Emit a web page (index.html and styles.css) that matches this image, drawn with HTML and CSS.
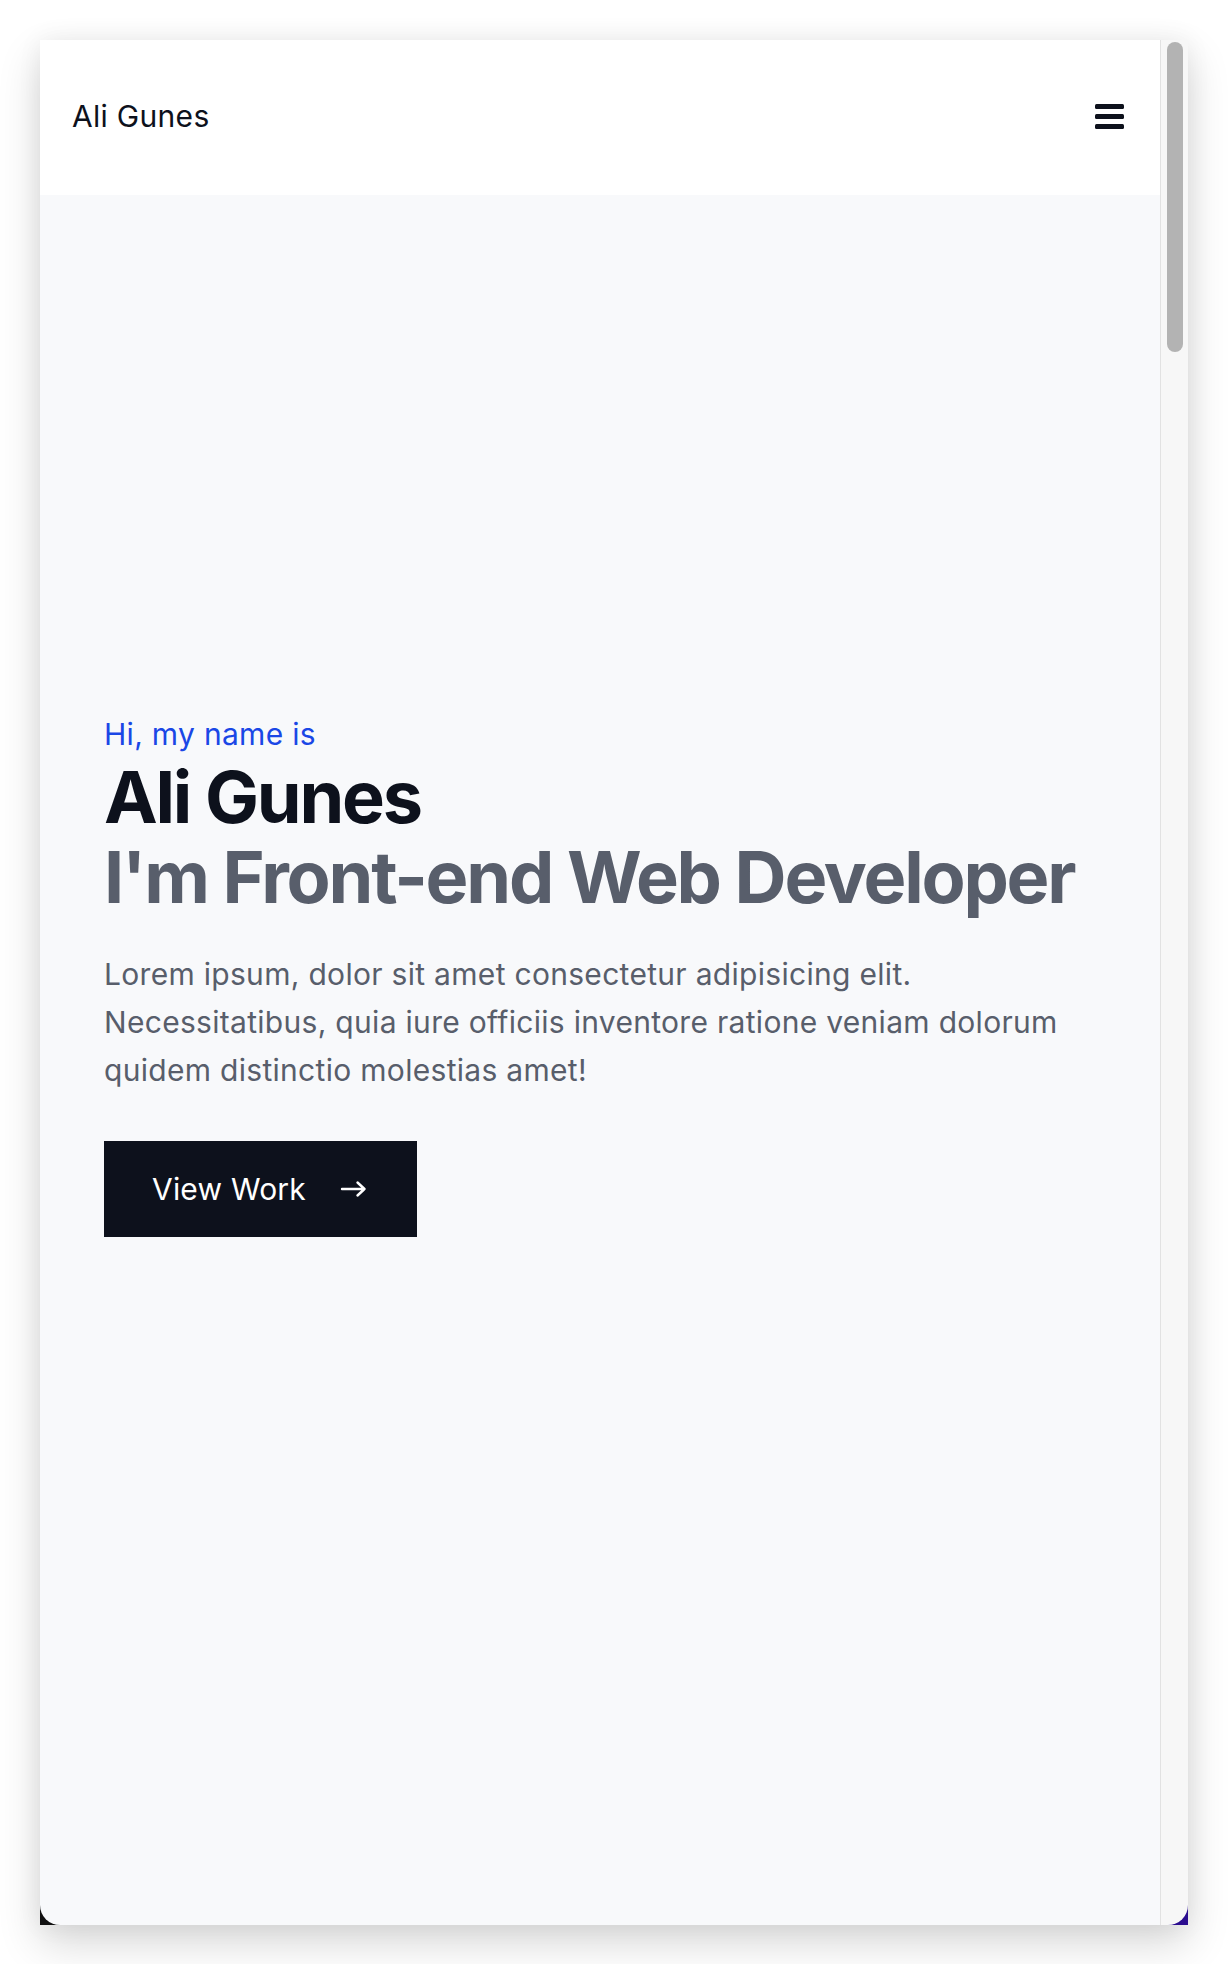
FILE: index.html
```html
<!DOCTYPE html>
<html lang="en">
<head>
    <meta charset="UTF-8">
    <meta name="viewport" content="width=device-width, initial-scale=1.0">
    <title>Ali Gunes</title>
    <link rel="stylesheet" href="styles.css">
</head>
<body>
    <div class="screen">
        <div class="window">
            <div class="page">
                <!-- Navbar -->
                <header class="navbar">
                    <a href="#" class="brand">Ali Gunes</a>
                    <button class="menu-btn" aria-label="Menu">
                        <svg width="29" height="25" viewBox="0 0 29 25">
                            <rect x="0" y="0" width="29" height="5" rx="1.5"/>
                            <rect x="0" y="10" width="29" height="5" rx="1.5"/>
                            <rect x="0" y="20" width="29" height="5" rx="1.5"/>
                        </svg>
                    </button>
                </header>

                <!-- Hero -->
                <section class="hero">
                    <p class="intro">Hi, my name is</p>
                    <h1 class="title">
                        <span class="name">Ali Gunes</span>
                        <span class="role">I'm Front-end Web Developer</span>
                    </h1>
                    <p class="lead">Lorem ipsum, dolor sit amet consectetur adipisicing elit. Necessitatibus, quia iure officiis inventore ratione veniam dolorum quidem distinctio molestias amet!</p>
                    <a href="#work" class="btn">
                        View Work
                        <svg width="27" height="18" viewBox="0 0 27 18">
                            <path d="M2 9 H24.5 M17.5 2.5 L24.5 9 L17.5 15.5" fill="none" stroke="currentColor" stroke-width="2.4" stroke-linecap="round" stroke-linejoin="round"/>
                        </svg>
                    </a>
                </section>
            </div>
            <div class="scrollbar">
                <div class="thumb"></div>
            </div>
        </div>
    </div>
</body>
</html>
```
FILE: styles.css
```css
body {
    margin: 0;
    background-color: #ffffff;
    font-family: Inter, "Noto Sans", Arial, sans-serif;
}

.screen {
    padding: 40px 40px 39px;
}

.window {
    display: flex;
    height: 1885px;
    /* les coins sombres derrière le bas de la fenêtre */
    background: linear-gradient(to right, #111 0%, #111 50%, #2b0d8f 50%, #2b0d8f 100%);
    box-shadow: 0 18px 40px rgba(0, 0, 0, 0.16), 0 0 24px rgba(0, 0, 0, 0.06);
}

.page {
    flex: 1;
    display: flex;
    flex-direction: column;
    background-color: #f8f9fb;
    border-bottom-left-radius: 20px;
    overflow: hidden;
}

.navbar {
    height: 155px;
    flex-shrink: 0;
    box-sizing: border-box;
    background-color: #fff;
    display: flex;
    align-items: center;
    justify-content: space-between;
    padding: 0 36px 3px 32px;
}

.brand {
    font-size: 30px;
    letter-spacing: 0.3px;
    color: #0d111c;
    text-decoration: none;
}

.menu-btn {
    border: none;
    background: none;
    padding: 0;
    display: flex;
    fill: #0d111c;
}

.hero {
    flex: 1;
    padding: 519px 65px 0 64px;
}

.intro {
    margin: 0;
    font-size: 30px;
    line-height: 40px;
    letter-spacing: 0.3px;
    color: #1a47e6;
}

.title {
    margin: 3px 0 0;
    font-size: 72px;
    line-height: 80px;
    font-weight: 700;
    letter-spacing: -2.2px;
}

.title span {
    display: block;
}

.name {
    color: #0d111c;
}

.role {
    color: #585e6b;
}

.lead {
    margin: 33px 0 0;
    font-size: 30px;
    line-height: 48px;
    letter-spacing: 0.3px;
    color: #585e6b;
}

.btn {
    margin-top: 47px;
    display: inline-flex;
    align-items: center;
    gap: 34px;
    width: 313px;
    height: 96px;
    box-sizing: border-box;
    padding: 0 48px 0 48px;
    background-color: #0d111c;
    color: #fff;
    font-size: 30px;
    letter-spacing: 0.2px;
    text-decoration: none;
}

.scrollbar {
    width: 28px;
    flex-shrink: 0;
    background-color: #f7f7f7;
    border-left: 1px solid #e2e2e2;
    border-bottom-right-radius: 20px;
    padding: 2px 5px 0 6px;
    box-sizing: border-box;
}

.thumb {
    height: 310px;
    border-radius: 8px;
    background-color: #b3b3b3;
}
```
